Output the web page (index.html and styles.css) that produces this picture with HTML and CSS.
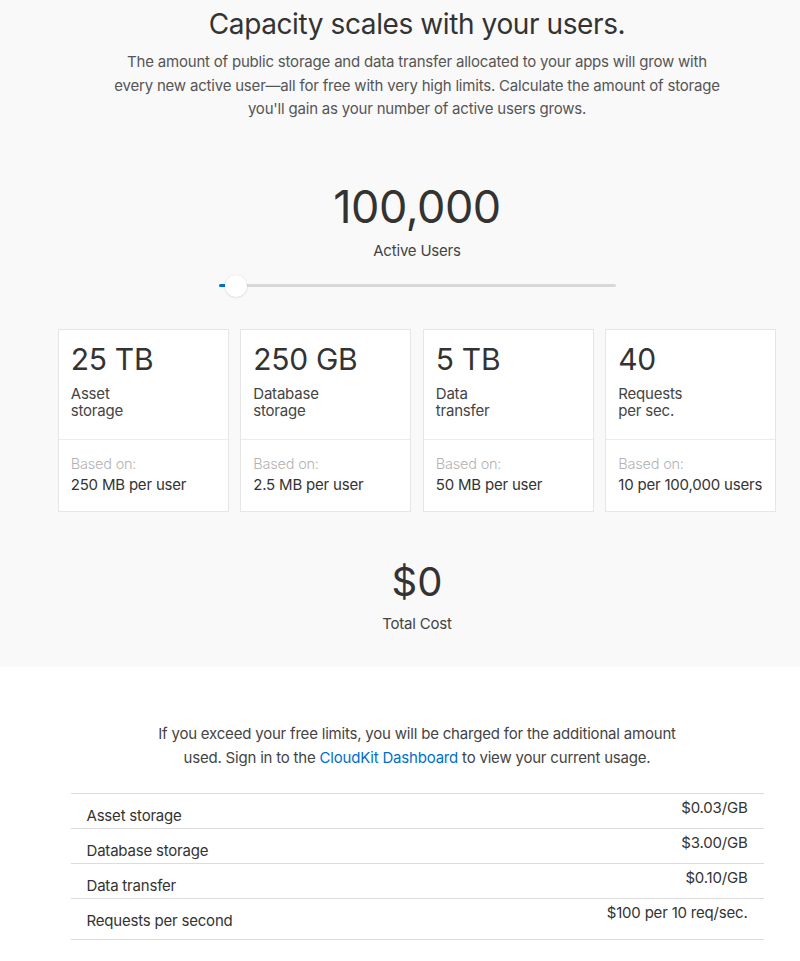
FILE: index.html
```html
<!DOCTYPE html>
<html lang="en">
<head>
<meta charset="utf-8">
<title>Capacity scales with your users</title>
<link rel="stylesheet" href="styles.css">
</head>
<body>
<section class="calc">
  <div class="inner">
    <h1 class="title">Capacity scales with your users.</h1>
    <p class="intro">The amount of public storage and data transfer allocated to your apps will grow with every new active user—all for free with very high limits. Calculate the amount of storage you'll gain as your number of active users grows.</p>
    <div class="users">100,000</div>
    <div class="users-label">Active Users</div>
    <div class="slider">
      <div class="track"><div class="fill"></div></div>
      <div class="thumb"></div>
    </div>
    <div class="cards">
      <div class="card">
        <div class="card-top"><div class="value">25 TB</div><div class="label">Asset<br>storage</div></div>
        <div class="card-bottom"><div class="based">Based on:</div><div class="rate">250 MB per user</div></div>
      </div>
      <div class="card">
        <div class="card-top"><div class="value">250 GB</div><div class="label">Database<br>storage</div></div>
        <div class="card-bottom"><div class="based">Based on:</div><div class="rate">2.5 MB per user</div></div>
      </div>
      <div class="card">
        <div class="card-top"><div class="value">5 TB</div><div class="label">Data<br>transfer</div></div>
        <div class="card-bottom"><div class="based">Based on:</div><div class="rate">50 MB per user</div></div>
      </div>
      <div class="card">
        <div class="card-top"><div class="value">40</div><div class="label">Requests<br>per sec.</div></div>
        <div class="card-bottom"><div class="based">Based on:</div><div class="rate">10 per 100,000 users</div></div>
      </div>
    </div>
    <div class="cost">$0</div>
    <div class="cost-label">Total Cost</div>
  </div>
</section>
<section class="pricing">
  <div class="inner">
    <p class="note">If you exceed your free limits, you will be charged for the additional amount used. Sign in to the <a href="#">CloudKit Dashboard</a> to view your current usage.</p>
    <div class="table">
      <div class="row"><span class="row-label">Asset storage</span><span class="row-price">$0.03/GB</span></div>
      <div class="row"><span class="row-label">Database storage</span><span class="row-price">$3.00/GB</span></div>
      <div class="row"><span class="row-label">Data transfer</span><span class="row-price">$0.10/GB</span></div>
      <div class="row last"><span class="row-label">Requests per second</span><span class="row-price">$100 per 10 req/sec.</span></div>
    </div>
  </div>
</section>
</body>
</html>
```
FILE: styles.css
```css
* { box-sizing: border-box; }
html, body { margin: 0; padding: 0; }
body {
  font-family: Inter, "Noto Sans", "Liberation Sans", sans-serif;
  color: #333;
  background: #fff;
  width: 800px;
}
.inner {
  padding-left: 34px;
  display: flex;
  flex-direction: column;
  align-items: center;
}
.calc {
  background: #f9f9f9;
  padding: 7px 0 33px;
}
.title {
  margin: 0;
  font-size: 28px;
  line-height: 34px;
  font-weight: 400;
  color: #333;
  letter-spacing: -0.4px;
}
.intro {
  margin: 9px 0 0;
  width: 620px;
  text-align: center;
  font-size: 15px;
  line-height: 23.5px;
  color: #555;
  letter-spacing: -0.2px;
}
.users {
  margin-top: 59px;
  font-size: 45px;
  line-height: 54px;
  color: #333;
  letter-spacing: -0.5px;
}
.users-label {
  margin-top: 7px;
  font-size: 15px;
  line-height: 20px;
  color: #444;
  letter-spacing: -0.2px;
}
.slider {
  position: relative;
  margin-top: 14px;
  width: 397px;
  height: 22px;
  display: flex;
  align-items: center;
}
.track {
  width: 100%;
  height: 3px;
  background: #d8d8d8;
  border-radius: 2px;
}
.fill {
  width: 12px;
  height: 3px;
  background: #0070c9;
  border-radius: 2px;
}
.thumb {
  position: absolute;
  left: 6px;
  top: 0;
  width: 22px;
  height: 22px;
  border-radius: 50%;
  background: #fff;
  box-shadow: 0 0 1px rgba(0,0,0,0.18), 0 1px 2px rgba(0,0,0,0.08);
}
.cards {
  margin-top: 32px;
  display: grid;
  grid-template-columns: repeat(4, 171px);
  column-gap: 11.5px;
}
.card {
  background: #fff;
  border: 1px solid #e6e6e6;
  height: 183px;
  display: flex;
  flex-direction: column;
}
.card-top {
  height: 110px;
  padding: 11px 12px 0;
  border-bottom: 1px solid #ececec;
}
.value {
  font-size: 30px;
  line-height: 36px;
  color: #333;
  letter-spacing: -0.3px;
}
.label {
  margin-top: 8px;
  font-size: 15px;
  line-height: 17px;
  color: #444;
  letter-spacing: -0.2px;
}
.card-bottom {
  padding: 13px 12px 0;
}
.based {
  font-size: 14.5px;
  line-height: 21px;
  color: #b3b3b3;
  font-weight: 300;
  letter-spacing: -0.2px;
}
.rate {
  font-size: 15px;
  line-height: 21px;
  color: #333;
  letter-spacing: -0.2px;
}
.cost {
  margin-top: 46px;
  font-size: 40px;
  line-height: 48px;
  color: #333;
}
.cost-label {
  margin-top: 8px;
  font-size: 15px;
  line-height: 20px;
  color: #444;
  letter-spacing: -0.2px;
}
.pricing {
  padding: 55px 0 20px;
}
.note {
  margin: 0;
  width: 540px;
  text-align: center;
  font-size: 15px;
  line-height: 24px;
  color: #444;
  letter-spacing: -0.2px;
}
.note a {
  color: #0070c9;
  text-decoration: none;
}
.table {
  margin-top: 23px;
  width: 693px;
  border-top: 1px solid #dcdcdc;
}
.row {
  display: flex;
  justify-content: space-between;
  height: 35px;
  padding: 0 16px;
  border-bottom: 1px solid #dcdcdc;
  font-size: 15px;
  line-height: 20px;
  color: #333;
  letter-spacing: -0.2px;
}
.row.last {
  height: 41px;
}
.row-label { align-self: flex-end; margin-bottom: 2px; }
.row.last .row-label { margin-bottom: 8px; }
.row-price { align-self: flex-start; margin-top: 4px; }
```
